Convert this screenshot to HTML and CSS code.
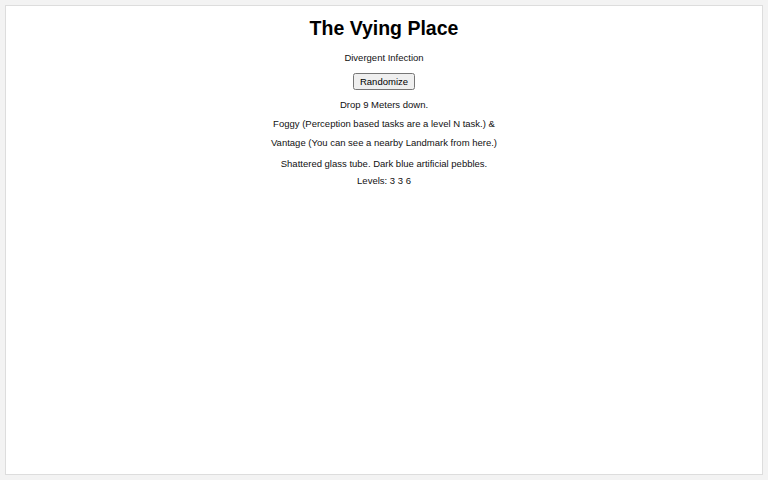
FILE: index.html
```html
<!DOCTYPE html>
<html lang="en">
<head>
  <meta charset="UTF-8" />
  <title>The Vying Place</title>
  <link rel="stylesheet" href="styles.css">
</head>
<body>
  <div class="panel">
    <h1>The Vying Place</h1>
    <p class="name">Divergent Infection</p>
    <button onclick="randomize()">Randomize</button>
    <p class="drop">Drop 9 Meters down.</p>
    <p class="trait">Foggy (Perception based tasks are a level N task.) &amp;</p>
    <p class="trait">Vantage (You can see a nearby Landmark from here.)</p>
    <p class="desc">Shattered glass tube. Dark blue artificial pebbles.</p>
    <p class="levels">Levels: 3 3 6</p>
  </div>
  <script>
    function randomize() {}
  </script>
</body>
</html>
```

FILE: styles.css
```css
body {
  margin: 0;
  padding: 5px;
  background: #f3f3f3;
  font-family: "Liberation Sans", Arial, sans-serif;
  font-size: 9.5px;
  color: #111;
  height: 480px;
  box-sizing: border-box;
}

.panel {
  background: #fff;
  border: 1px solid #ddd;
  height: 100%;
  box-sizing: border-box;
  text-align: center;
  padding-top: 11px;
}

h1 {
  font-size: 19.5px;
  margin: 0 0 12px;
  color: #000;
}

p {
  margin: 0 0 9px;
}

.name {
  margin-bottom: 10px;
}

button {
  font-family: "Liberation Sans", Arial, sans-serif;
  font-size: 9.5px;
  padding: 1px 5px;
  margin-bottom: 9px;
}

.drop {
  margin-bottom: 8px;
}

.trait {
  margin-bottom: 8px;
}

.trait + .trait {
  margin-bottom: 10px;
}

.desc {
  margin-bottom: 6px;
}
```
